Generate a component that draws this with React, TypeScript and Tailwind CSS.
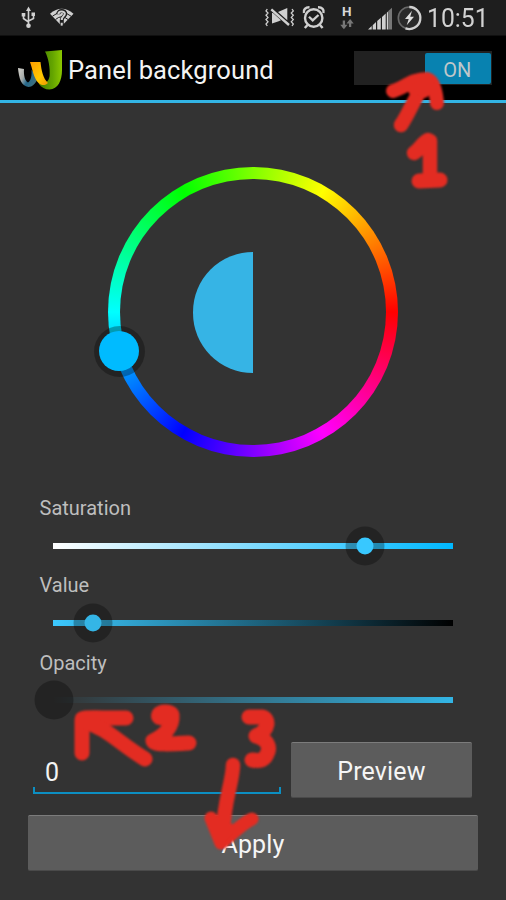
import { useState } from 'react';

interface SliderProps {
  label: string;
  // 0..400, distance from the left end of the track
  position: number;
  trackClass: string;
  dotClass?: string;
}

function Slider({ label, position, trackClass, dotClass }: SliderProps) {
  return (
    <div className="h-[77.3px]">
      <div className="ml-[39.5px] h-6 w-fit text-[20px] leading-6 text-[#bebebe]">{label}</div>
      <div className="relative mt-[22.6px] ml-[53px] h-[6px] w-[399.5px]">
        <div className={`h-full w-full ${trackClass}`} />
        <div
          className="absolute top-1/2 flex size-[39px] -translate-x-1/2 -translate-y-1/2 items-center justify-center"
          style={{ left: position }}
        >
          <div className="absolute inset-0 rounded-full bg-black/30" />
          {dotClass && <div className={`relative size-[17px] rounded-full ${dotClass}`} />}
        </div>
      </div>
    </div>
  );
}

function StatusBar() {
  return (
    <div className="flex h-9 items-center border-b border-[#101010] bg-[#1e1e1e]">
      <svg className="h-9 w-[260px]" viewBox="0 0 260 36" fill="none" stroke="#d0d0d0">
        {/* usb */}
        <path d="M28.5 10V25M23.5 15V18.5L28.5 22M33.5 14.5V18.5L28.5 21" strokeWidth="1.6" />
        <path d="M28.5 6.5L31 11H26Z" fill="#d0d0d0" stroke="none" />
        <circle cx="28.5" cy="25.7" r="2.3" fill="#d0d0d0" stroke="none" />
        <path d="M21.7 13H25.3V16.6H21.7ZM31.5 12.5H35V16H31.5Z" fill="#d0d0d0" stroke="none" />
        {/* wifi with a question mark */}
        <path d="M50 13.7Q61.7 3.8 73.5 13.7L61.7 26Z" fill="#d0d0d0" stroke="none" />
        <path d="M52.5 16.2Q61.7 8.5 71 16.2M55.5 19.5Q61.7 14 68 19.5" stroke="#1e1e1e" strokeWidth="1" />
        <path d="M58.2 14.2C58.2 10 65.3 10 65.3 13.8C65.3 16.5 61.8 16.5 61.8 19.8V25.5" stroke="#1e1e1e" strokeWidth="4" />
        <path d="M58.5 14C58.5 10.8 64.8 10.8 64.8 13.7C64.8 16.2 61.7 16.2 61.7 20M61.7 22.7V25.5" strokeWidth="2.1" />
      </svg>
      <svg className="h-9 w-[167px]" viewBox="260 0 167 36" fill="none" stroke="#d0d0d0">
        {/* vibrate / muted */}
        <path d="M267.3 9L266 11L268 13L266 15.2L268 17.4L266 19.6L268 21.8L266 24L267.3 26M292 9L293.3 11L291.3 13L293.3 15.2L291.3 17.4L293.3 19.6L291.3 21.8L293.3 24L292 26" strokeWidth="1.3" />
        <path d="M272 13H273L281 20.3L278 21.5L272 23.5ZM278 12L287.3 8V20.3Z" fill="#d0d0d0" stroke="none" />
        <path d="M271.3 9.3L289 25" strokeWidth="2.4" />
        {/* alarm */}
        <circle cx="313.7" cy="18" r="8.7" strokeWidth="2.4" />
        <path d="M309 16.8L312.7 20.4L318.5 15" strokeWidth="2.3" />
        <path d="M307.5 25L304.8 28M320 25L322.6 28" strokeWidth="2.5" />
        <path d="M304 13C303 9.5 305.5 7.2 309.5 7.3M323.4 13C324.5 9.5 322 7.2 318 7.3" strokeWidth="2.5" />
        {/* data arrows */}
        <path d="M343.9 20.5V28M350.1 27V20.5" stroke="#777777" strokeWidth="2.3" />
        <path d="M340.3 24.7H347.5L343.9 29.2ZM346.5 23.4H353.7L350.1 18.9Z" fill="#777777" stroke="none" />
        <text x="342" y="16.2" className="font-[Roboto,sans-serif] text-[13.5px] font-bold" fill="#d8d8d8" stroke="none">H</text>
        {/* signal */}
        <path d="M368 29.5L371.7 26V29.5ZM372.7 25.2L376 22V29.5H372.7ZM377.2 21L380.8 17.8V29.5H377.2ZM382 17L385.7 13.6V29.5H382ZM386.8 12.7L388.3 11.2V29.5H386.8Z" fill="#d0d0d0" stroke="none" />
        <path d="M388.3 11L392 7.8V29.5H388.3Z" fill="#777777" stroke="none" />
        {/* battery */}
        <circle cx="409.3" cy="18" r="11" fill="#2a2a2a" stroke="#686868" strokeWidth="1.6" />
        <path d="M409.3 7A11 11 0 1 1 405.5 28.3" strokeWidth="2.3" />
        <path d="M412 10.8L405 19H408.7L406.7 25.2L414 16.8H410.2Z" fill="#e0e0e0" stroke="none" />
      </svg>
      <div className="w-fit origin-left scale-x-[0.95] text-[26px] leading-9 text-[#d2d2d2]">10:51</div>
    </div>
  );
}

function Logo() {
  return (
    <svg className="mt-[2px] h-[50px] w-[54px]" viewBox="14 44 54 50">
      <defs>
        <linearGradient id="tail" x1="0" x2="1" y1="0" y2="0.5">
          <stop offset="0" stopColor="#d7d5cf" />
          <stop offset="0.4" stopColor="#a4a9a7" />
          <stop offset="0.65" stopColor="#24678b" />
          <stop offset="1" stopColor="#40717d" />
        </linearGradient>
        <linearGradient id="mid" x1="0" x2="1" y1="0" y2="1">
          <stop offset="0" stopColor="#ff9c00" />
          <stop offset="0.6" stopColor="#ffc900" />
          <stop offset="1" stopColor="#ef9700" />
        </linearGradient>
        <linearGradient id="leaf" x1="0" x2="1" y1="0" y2="0">
          <stop offset="0" stopColor="#437b00" />
          <stop offset="0.6" stopColor="#64a500" />
          <stop offset="1" stopColor="#8bc800" />
        </linearGradient>
      </defs>
      <path d="M18 68L24 69C23.5 75 25 81 28 82.5C31 81 32 75 31.5 70L38 78C35.5 84 32 87 28.5 87C21 86 19 78 18 68Z" fill="url(#tail)" />
      <path d="M45 51.5L62 50V70C62 81 58 89 49.5 89.5C45 89.5 41.5 87.5 38.5 83.5C43 84.5 48.5 83 49.6 76C50.3 68 48.5 58 45 51.5Z" fill="url(#leaf)" />
      <path d="M30 62L40.5 62C41.5 71 43 78 48 83C46 85.5 41.5 86 38.5 83C33.5 78 32.5 69 30 62Z" fill="url(#mid)" />
    </svg>
  );
}

function ColorWheel() {
  return (
    <div className="relative mx-auto mt-[64px] size-[290px]">
      <div className="size-full rounded-full bg-[conic-gradient(from_90deg,#f00,#f0f,#00f,#0ff,#0f0,#ff0,#f00)] p-[12px]">
        <div className="flex size-full items-center rounded-full bg-[#333333]">
          <div className="ml-[72.5px] h-[121px] w-[60.5px] rounded-l-full bg-[#36b4e5]" />
        </div>
      </div>
      <div className="absolute top-[158.5px] left-[-14.2px] size-[51px] rounded-full bg-black/30 p-[5.5px]">
        <div className="size-full rounded-full bg-[#00bbff]" />
      </div>
    </div>
  );
}

// Red hand-drawn steps, laid over the screen
function Steps() {
  return (
    <svg
      className="pointer-events-none absolute inset-0 h-[900px] w-[506px] blur-[0.8px]"
      viewBox="0 0 506 900"
      fill="none"
      stroke="#e32c22"
      strokeLinecap="round"
      strokeLinejoin="round"
    >
      <path d="M401 125C408 115 411 105 423 86" strokeWidth="14.5" />
      <path d="M393 91C404 88 412 79 427 79C434 81 436 93 437 103" strokeWidth="14" />
      <path d="M414 90L428 83L424 92" strokeWidth="12" />
      <path d="M414 153C420 149 423 142 428 140L430 141V178" strokeWidth="14.5" />
      <path d="M419 181L440 180" strokeWidth="15" />

      <path d="M82 753V720C82 717 86 718 126 718" strokeWidth="15" />
      <path d="M86 722C108 729 120 744 145 759" strokeWidth="15" />
      <path d="M159 715C159 711 171 711 172 715C173 726 165 735 153 741C154 745 171 744 189 743" strokeWidth="15" />
      <path d="M160 716L170 718" strokeWidth="18" />

      <path d="M249 717H262C269 718 270 730 256 736C267 739 271 747 267 754C264 761 259 761 252 760" strokeWidth="15" />
      <path d="M233 765C233 781 224 800 223 832" strokeWidth="14.5" />
      <path d="M211 818L221 843C229 838 239 825 252 819" strokeWidth="13" />
      <path d="M220 823V838L229 829" strokeWidth="12" />
    </svg>
  );
}

export default function App() {
  const [enabled, setEnabled] = useState(true);
  const [opacity, setOpacity] = useState('0');

  return (
    <div className="relative h-[900px] w-[506px] overflow-hidden bg-[#333333] font-[Roboto,sans-serif]">
      <StatusBar />

      <header className="flex h-[67px] items-center border-b-[3px] border-[#33b5e5] bg-black pr-[14px] pl-[14px]">
        <Logo />
        <h1 className="mt-[4px] text-[25.5px] leading-8 tracking-[0.12px] whitespace-nowrap text-[#f3f3f3]">
          Panel background
        </h1>
        <button
          onClick={() => setEnabled(!enabled)}
          className="ml-auto flex h-[34px] w-[138px] justify-end bg-[#212121] p-[1.5px]"
        >
          <span className="flex h-full w-[65.5px] items-center justify-center rounded-[2px] bg-[#0882b0] pt-[3px] pr-[1px] text-[20px] text-[#bfc7ca]">
            {enabled ? 'ON' : 'OFF'}
          </span>
        </button>
      </header>

      <ColorWheel />

      <div className="mt-[39px]">
        <Slider
          label="Saturation"
          position={312}
          trackClass="bg-linear-to-r/srgb from-white to-[#00b8ff]"
          dotClass="bg-[#38c8ff]"
        />
        <Slider
          label="Value"
          position={39.7}
          trackClass="bg-linear-to-r/srgb from-[#3cc9ff] to-black"
          dotClass="bg-[#34b5e6]"
        />
        <Slider label="Opacity" position={0.5} trackClass="bg-linear-to-r/srgb from-[#33b5e5]/0 to-[#33b5e5]" />
      </div>

      <div className="mt-[14px] flex pl-[33px]">
        <div className="relative h-[52px] w-[248px] border-b-2 border-[#0c8fc2]">
          <input
            value={opacity}
            onChange={(e) => setOpacity(e.target.value)}
            className="h-[61px] w-full bg-transparent pl-3 text-[25px] text-[#f3f3f3] outline-none"
          />
          <div className="absolute bottom-0 left-0 h-[5px] w-full border-x-2 border-[#0c8fc2]" />
        </div>
        <button className="ml-[10px] h-[56px] w-[181px] rounded-[2px] border-t border-b border-t-[#7c7c7c] border-b-[#4a4a4a] bg-[#5c5c5c] pt-[4px] text-[25px] tracking-[0.15px] text-[#f5f5f5]">
          Preview
        </button>
      </div>

      <button className="mt-[17px] ml-[28px] h-[56px] w-[450px] rounded-[2px] border-t border-b border-t-[#7c7c7c] border-b-[#4a4a4a] bg-[#5c5c5c] pt-[4px] text-[25px] tracking-[0.15px] text-[#f5f5f5]">
        Apply
      </button>

      <Steps />
    </div>
  );
}
